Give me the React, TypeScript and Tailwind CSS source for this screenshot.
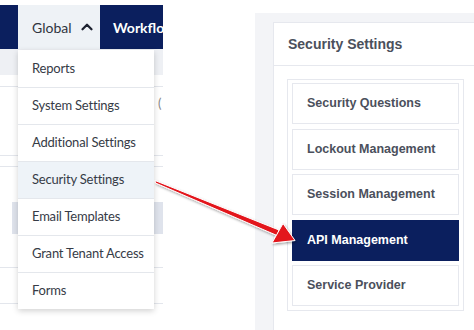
import { ChevronUp } from 'lucide-react'

const menuItems = [
  'Reports',
  'System Settings',
  'Additional Settings',
  'Security Settings',
  'Email Templates',
  'Grant Tenant Access',
  'Forms',
]

const securityItems = [
  'Security Questions',
  'Lockout Management',
  'Session Management',
  'API Management',
  'Service Provider',
]

function Arrow() {
  return (
    <svg className="absolute inset-0 pointer-events-none" width={474} height={330} viewBox="0 0 474 330">
      <defs>
        <filter id="sh" x="-10%" y="-10%" width="120%" height="120%">
          <feDropShadow dx="1" dy="1.5" stdDeviation="1" floodColor="#000" floodOpacity="0.35" />
        </filter>
      </defs>
      <g filter="url(#sh)">
        <polygon
          points="155,180.5 279,230 277,235.5 155.5,183"
          fill="#e3141c"
          stroke="#fff"
          strokeWidth="1"
          strokeLinejoin="round"
        />
        <polygon points="295,240.5 272,243 283,223.5" fill="#e3141c" stroke="#fff" strokeWidth="1" strokeLinejoin="round" />
      </g>
    </svg>
  )
}

export default function App() {
  return (
    <div className="relative w-[474px] h-[330px] bg-white overflow-hidden flex" style={{ fontFamily: 'Arial' }}>
      {/* left crop: nav + dropdown */}
      <div className="relative w-[163px] shrink-0 h-full flex flex-col pt-[5px] font-['Lato',sans-serif]">
        <div className="h-[44px] bg-[#0b1f5e] flex shrink-0 overflow-hidden">
          <div className="w-[18px] shrink-0" />
          <div className="w-[82px] shrink-0 bg-[#eef2f6] flex items-center pl-[14px] gap-[6px] text-[14px] text-[#2f3440]">
            Global
            <ChevronUp size={18} strokeWidth={3} className="text-[#1d2230]" />
          </div>
          <div className="flex items-center pl-[13px] text-[14px] font-bold text-white whitespace-nowrap">Workflow</div>
        </div>
        <div className="flex-1 flex flex-col bg-white">
          <div className="h-[26px] bg-[#eef0f4]" />
          <div className="h-[12px] border-b border-[#e3e6ec]" />
          <div className="h-[69px] border-b border-[#e3e6ec] pl-[158px] pt-[10px] text-[13px] text-[#888] leading-none">(</div>
          <div className="h-[11px] border-b border-[#e3e6ec]" />
          <div className="h-[35px]" />
          <div className="h-[32px] bg-[#dfe3ec] ml-[12px]" />
          <div className="h-[34px] border-b border-[#e3e6ec]" />
          <div className="h-[36px] border-b border-[#e3e6ec]" />
        </div>
        <div className="absolute top-[50px] left-[18px] w-[136px] bg-white shadow-[0_2px_6px_rgba(0,0,0,0.18)] flex flex-col">
          {menuItems.map((item, i) => (
            <div
              key={item}
              className={`h-[37px] flex items-center pl-[14px] text-[13px] tracking-[-0.2px] text-[#363b46] whitespace-nowrap ${
                i > 0 ? 'border-t border-[#e4e7ec]' : ''
              } ${item === 'Security Settings' ? 'bg-[#eef3f8]' : ''}`}
            >
              {item}
            </div>
          ))}
        </div>
      </div>

      {/* right crop: security settings panel */}
      <div className="ml-[92px] mt-[13px] flex-1 bg-[#f3f4f7] pl-[18px] pt-[9px] flex font-['Liberation_Sans',Arial,sans-serif]">
        <div className="flex-1 bg-white border-l border-t border-[#e6e8ee] flex flex-col">
          <div className="h-[43px] shrink-0 border-b border-[#e6e8ee] flex items-center pl-[14px] text-[14px] font-bold text-[#4b505c]">
            Security Settings
          </div>
          <div className="ml-[13px] mt-[13px] w-[177px] border border-[#e6e8ee] pt-[3px] pb-[4px] px-[4px] flex flex-col gap-[4.5px]">
            {securityItems.map((item) => {
              const active = item === 'API Management'
              return (
                <div
                  key={item}
                  className={`h-[41px] flex items-center pl-[14px] text-[12.5px] font-bold whitespace-nowrap border ${
                    active ? 'bg-[#0b1f5e] border-[#0b1f5e] text-white' : 'bg-white border-[#e6e8ee] text-[#4b505c]'
                  }`}
                >
                  {item}
                </div>
              )
            })}
          </div>
        </div>
      </div>

      <Arrow />
    </div>
  )
}
